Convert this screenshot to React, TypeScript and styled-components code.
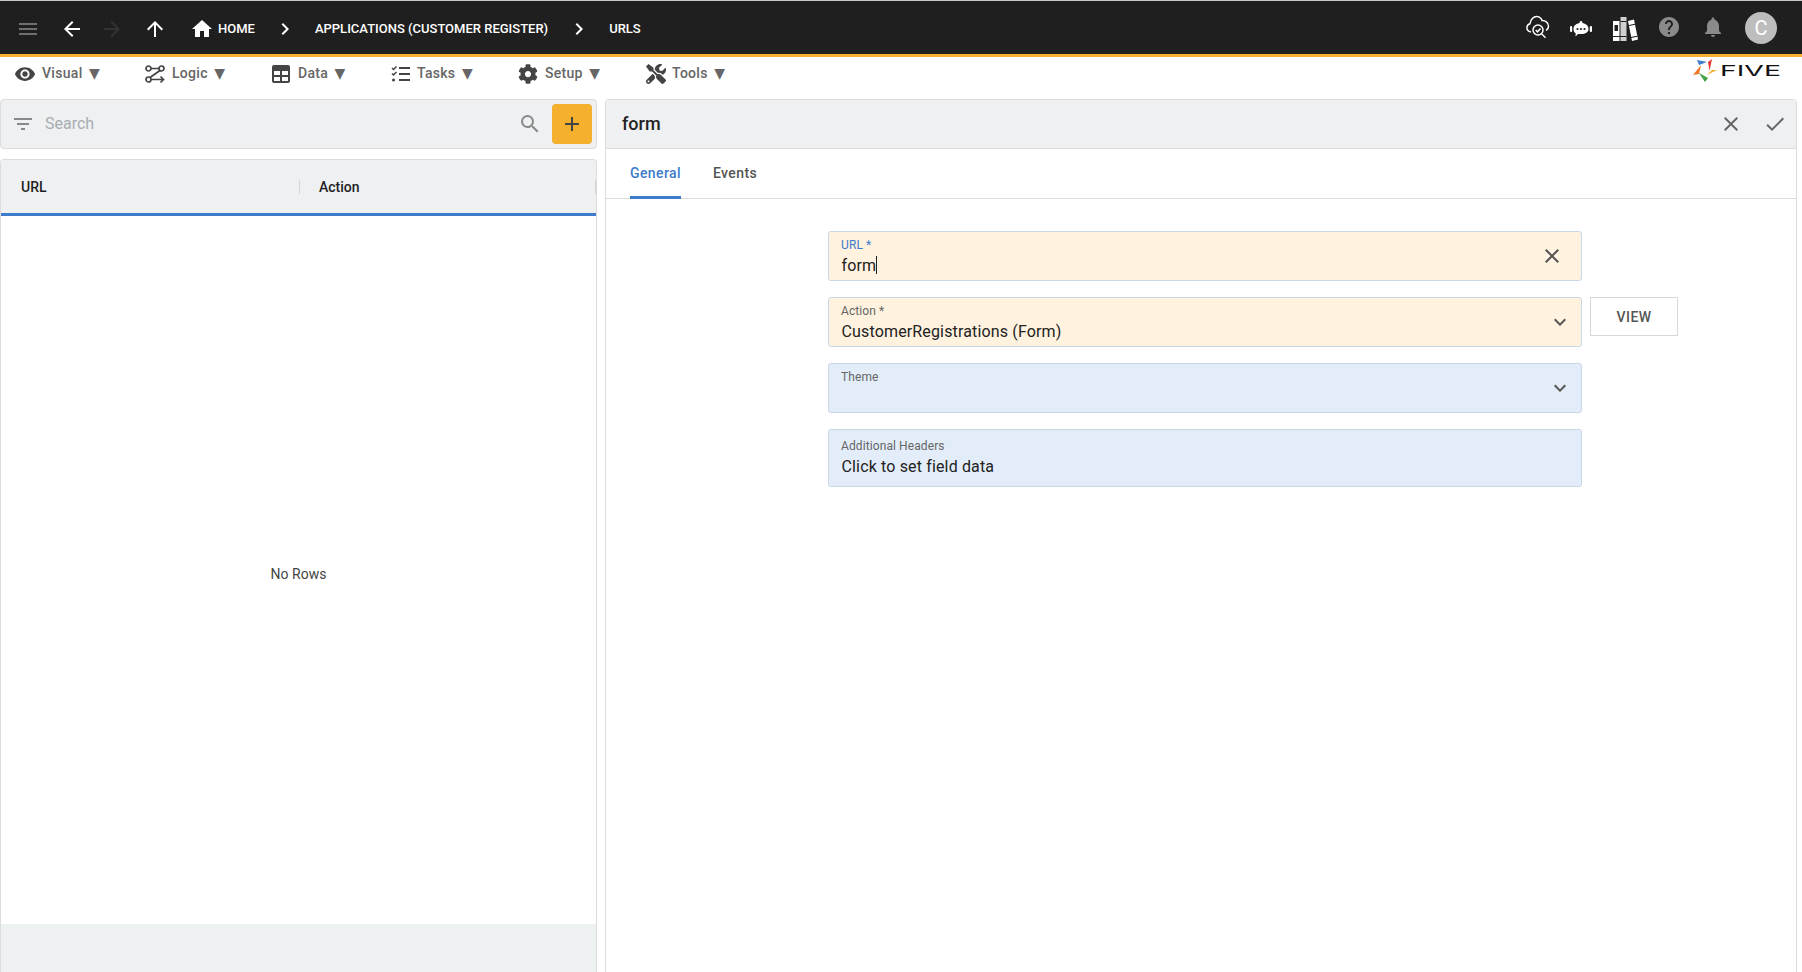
import React from "react";
import styled, { createGlobalStyle } from "styled-components";
import { MdMenu, MdArrowBack, MdArrowForward, MdArrowUpward, MdHome, MdChevronRight, MdVisibility, MdHelp, MdNotifications, MdSearch, MdAdd, MdClose, MdCheck, MdFilterList, MdKeyboardArrowDown } from "react-icons/md";
import { FaCog, FaTools } from "react-icons/fa";

const Global = createGlobalStyle`
  html, body { margin: 0; padding: 0; height: 100%; background: #fff; overflow: hidden; }
  body { font-family: Roboto, "Liberation Sans", sans-serif; }
  * { box-sizing: border-box; }
`;
const Page = styled.div`display:flex;flex-direction:column;height:972px;width:1802px;overflow:hidden;`;
const TopBar = styled.header`
  height: 57px; flex: none; background: #1f1f1f; border-top: 1px solid #c8c8c8; border-bottom: 3px solid #f5b02e;
  display:flex; align-items:center; padding: 2px 25px 0 16px; color:#fff;
`;
const IconBtn = styled.span<{ $c?: string; $w?: number; $s?: number; $up?: number }>`
  display:inline-flex; align-items:center; justify-content:center; flex:none;
  width:${p => p.$w ?? 44}px; color:${p => p.$c ?? "#fff"}; font-size:${p => p.$s ?? 24}px;
  margin-top:${p => -(p.$up ?? 0)}px;
`;
const Crumb = styled.span`font-size:13px;font-weight:500;color:#fff;white-space:nowrap;`;
const Spacer = styled.div`flex:1;`;
const Avatar = styled.div`width:32px;height:32px;border-radius:50%;background:#bdbdbd;color:#fff;font-size:20px;display:flex;align-items:center;justify-content:center;margin-left:10px;margin-top:-1px;`;
const Menu = styled.nav`height:42px;flex:none;display:flex;align-items:center;padding:0 0 9px 14px;position:relative;`;
const MenuItem = styled.div<{ $w: number; $gap: number }>`display:flex;align-items:center;gap:${p => p.$gap}px;width:${p => p.$w}px;font-size:14px;font-weight:500;color:#666;letter-spacing:.3px;flex:none;svg{color:#444;flex:none;}`;
const MenuText = styled.span`display:block;margin-top:-2px;`;
const Tri = styled.span`font-family:"DejaVu Sans",sans-serif;font-size:14px;margin-left:6.5px;letter-spacing:0;`;
const Logo = styled.div`position:absolute;right:20px;top:1px;display:flex;`;
const Main = styled.div`flex:1;display:flex;padding:0 5px 0 0;gap:8px;min-height:0;`;
const Left = styled.section`width:597px;flex:none;display:flex;flex-direction:column;gap:10px;`;
const SearchBar = styled.div`height:50px;flex:none;background:#eef0f2;border:1px solid #dcdcdc;border-radius:4px;display:flex;align-items:center;padding:0 4px 0 10px;`;
const SearchText = styled.div`flex:1;font-size:16px;color:#a9adb0;margin:-2px 0 0 10px;`;
const AddBtn = styled.div`width:40px;height:40px;background:#f5b02e;border-radius:4px;color:#444;display:flex;align-items:center;justify-content:center;font-size:24px;margin-left:10px;`;
const Table = styled.div`flex:1;display:flex;flex-direction:column;border:1px solid #dcdcdc;border-bottom:none;border-radius:4px 4px 0 0;min-height:0;`;
const THead = styled.div`height:56px;flex:none;background:#eef0f2;border-bottom:3px solid #3d7ccb;display:flex;align-items:center;border-radius:4px 4px 0 0;`;
const Th = styled.div<{ $w: number; $pad: number }>`width:${p => p.$w}px;padding-left:${p => p.$pad}px;font-size:14px;font-weight:500;color:#1f1f1f;position:relative;
  &::after{content:"";position:absolute;right:0;top:50%;margin-top:-7px;height:14px;width:1px;background:#d5d5d5;}`;
const TBody = styled.div`flex:1;display:flex;align-items:center;justify-content:center;font-size:14px;color:#444;padding-top:7px;`;
const TFoot = styled.div`height:48px;flex:none;background:#edf1f2;`;
const Right = styled.section`flex:1;display:flex;flex-direction:column;border:1px solid #dcdcdc;border-bottom:none;border-radius:4px 4px 0 0;min-width:0;`;
const FormHead = styled.div`height:49px;flex:none;background:#eef0f2;border-bottom:1px solid #dcdcdc;display:flex;align-items:center;padding:0 0 0 16px;`;
const FormTitle = styled.div`font-size:18px;font-weight:500;color:#222;margin-top:-2px;`;
const Tabs = styled.div`height:50px;flex:none;border-bottom:1px solid #dcdcdc;display:flex;padding-left:24px;gap:32px;`;
const Tab = styled.div<{ $on?: boolean }>`height:50px;display:flex;align-items:center;font-size:14px;font-weight:500;padding-top:1px;color:${p => p.$on ? "#3d7ccb" : "#555"};border-bottom:3px solid ${p => p.$on ? "#3d7ccb" : "transparent"};letter-spacing:.4px;`;
const FormBody = styled.div`padding:32px 0 0 222px;display:flex;flex-direction:column;gap:16px;`;
const Row = styled.div`display:flex;gap:8px;align-items:flex-start;`;
const Field = styled.div<{ $bg: string; $h?: number }>`width:754px;height:${p => p.$h ?? 50}px;background:${p => p.$bg};border:1px solid #c9d8e8;border-radius:3px;padding:${p => (p.$h ? 9 : 6)}px 12px 0;position:relative;`;
const Label = styled.div<{ $c?: string }>`font-size:12px;line-height:14px;letter-spacing:.1px;color:${p => p.$c ?? "#666"};`;
const Value = styled.div`font-size:16px;line-height:20px;letter-spacing:.15px;color:#222;margin-top:4px;height:20px;padding-left:.5px;`;
const Caret = styled.span`display:inline-block;width:1px;height:18px;background:#222;vertical-align:-3px;`;
const FieldIcon = styled.span<{ $r: number }>`position:absolute;right:${p => p.$r}px;top:50%;transform:translateY(-50%);display:flex;color:#555;font-size:24px;`;
const ViewBtn = styled.div`width:88px;height:39px;border:1px solid #d5d9dd;display:flex;align-items:center;justify-content:center;font-size:14px;font-weight:500;color:#555;letter-spacing:.4px;`;

const LogicIcon = () => (
  <svg width="20" height="20" viewBox="0 0 20 20" fill="none" stroke="currentColor" strokeWidth="1.700"><circle cx="3.500" cy="4.500" r="2.500" /><circle cx="16.500" cy="4.500" r="2.500" /><circle cx="3.500" cy="15.500" r="2.500" /><path d="M6 4.500h8M15 6.500 5 13.500M6 15.500h12.500M15.500 12.500l3 3-3 3" /></svg>
);
const DataIcon = () => (
  <svg width="24" height="24" viewBox="0 0 24 24" fill="currentColor"><path fillRule="evenodd" d="M5 3h14a2 2 0 0 1 2 2v14a2 2 0 0 1-2 2H5a2 2 0 0 1-2-2V5a2 2 0 0 1 2-2Zm0 6v4h6V9H5Zm8 0v4h6V9h-6Zm-8 6v4h6v-4H5Zm8 0v4h6v-4h-6Z" /></svg>
);
const TasksIcon = () => (
  <svg width="24" height="24" viewBox="0 0 24 24" fill="none" stroke="currentColor"><path strokeWidth="1.500" d="M3 6l1.500 1.500L7.500 4.500M3 11.500l1.500 1.500 3-3" /><circle cx="4.500" cy="18" r="1.500" fill="currentColor" stroke="none" /><path strokeWidth="2.200" d="M10 6h11M10 12h11M10 18h11" /></svg>
);
const CloudIcon = () => (
  <svg width="26" height="26" viewBox="-1 0 26 26" fill="none" stroke="#fff" strokeWidth="1.500"><path d="M6 19c-3-.3-4.500-2.500-4-5 .3-1.800 1.500-3 3-3.300C5.500 6.500 9 3 12 3.500c2.500.3 4.300 1.800 5 4 3-.3 6.500 2 6.500 5.500 0 2-1 3.500-2.500 4.300" /><circle cx="13" cy="17" r="5" /><path d="M16.500 20.800l4 4" /><path d="M10.700 17l1.800 1.800 3-3.300" /></svg>
);
const BotIcon = () => (
  <svg width="24" height="24" viewBox="0 0 24 24" fill="#fff"><circle cx="12" cy="5.200" r="1.300" /><path d="M12 6c4.500 0 7.500 2.500 7.500 6s-3 5-7.500 5H9l-2.500 2.500.2-3.200C5 15.300 4.500 13.800 4.500 12c0-3.500 3-6 7.500-6Z" /><rect x="1" y="9" width="2.200" height="6" rx="1" /><rect x="20.800" y="9" width="2.200" height="6" rx="1" /><g fill="#1f1f1f"><circle cx="8.500" cy="12" r="1.100" /><circle cx="12" cy="12" r="1.100" /><circle cx="15.500" cy="12" r="1.100" /></g></svg>
);
const BooksIcon = () => (
  <svg width="26" height="26" viewBox="0 0 26 26" fill="#fff"><rect x="1" y="5" width="6.500" height="20" /><rect x="8.500" y="1" width="6" height="24" fill="#d0d0d0" /><path d="m16 5 6-1.500L26 23.500l-6 1.500Z" /><g fill="#1f1f1f"><rect x="2.500" y="9" width="3.500" height="6" /><rect x="1" y="20" width="13.500" height="1" /><rect x="8.500" y="5" width="6" height="1" /><path d="m17 9 6-1.300.2 1-6 1.300ZM19 21l6-1.300.2 1-6 1.300Z" /></g></svg>
);
const FiveLogo = () => (
  <svg width="90" height="26" viewBox="0 0 90 26">
    <path d="M5 2l10 2-8 3Z" fill="#3d7ccb" /><path d="M20 1l-2.500 12L16 4Z" fill="#e53935" /><path d="M25 12l-10 5 5-5Z" fill="#f5b02e" /><path d="M7 15l9 5-3 4Z" fill="#43a047" /><path d="M9 7L1 17l6-1Z" fill="#f4762a" />
    <text x="28" y="18" fontFamily="Inter, sans-serif" fontSize="14" fontWeight="400" textLength="61" lengthAdjust="spacingAndGlyphs" fill="#111">FIVE</text>
  </svg>
);

const Caption = ({ t }: { t: string }) => <MenuText>{t}<Tri>▼</Tri></MenuText>;

export default function App() {
  return (
    <Page>
      <Global />
      <TopBar>
        <IconBtn $c="#6f6f6f" $w={24}><MdMenu /></IconBtn>
        <IconBtn $w={52} style={{ marginLeft: 6 }}><MdArrowBack /></IconBtn>
        <IconBtn $c="#333" $w={27}><MdArrowForward /></IconBtn>
        <IconBtn $w={60}><MdArrowUpward /></IconBtn>
        <IconBtn $w={33}><MdHome /></IconBtn>
        <Crumb>HOME</Crumb>
        <IconBtn $w={60}><MdChevronRight /></IconBtn>
        <Crumb>APPLICATIONS (CUSTOMER REGISTER)</Crumb>
        <IconBtn $w={61}><MdChevronRight /></IconBtn>
        <Crumb>URLS</Crumb>
        <Spacer />
        <IconBtn $w={44} $up={5}><CloudIcon /></IconBtn>
        <IconBtn $w={44}><BotIcon /></IconBtn>
        <IconBtn $w={44}><BooksIcon /></IconBtn>
        <IconBtn $w={44} $c="#8a8a8a" $up={3}><MdHelp /></IconBtn>
        <IconBtn $w={44} $c="#8a8a8a" $up={3}><MdNotifications /></IconBtn>
        <Avatar>C</Avatar>
      </TopBar>
      <Menu>
        <MenuItem $w={131} $gap={6}><MdVisibility size={22} /><Caption t="Visual" /></MenuItem>
        <MenuItem $w={124} $gap={7}><LogicIcon /><Caption t="Logic" /></MenuItem>
        <MenuItem $w={120} $gap={5}><DataIcon /><Caption t="Data" /></MenuItem>
        <MenuItem $w={129} $gap={4}><TasksIcon /><Caption t="Tasks" /></MenuItem>
        <MenuItem $w={128} $gap={7}><FaCog size={20} /><Caption t="Setup" /></MenuItem>
        <MenuItem $w={120} $gap={6}><FaTools size={20} /><Caption t="Tools" /></MenuItem>
        <Logo><FiveLogo /></Logo>
      </Menu>
      <Main>
        <Left>
          <SearchBar>
            <IconBtn $c="#888" $w={24}><MdFilterList /></IconBtn>
            <SearchText>Search</SearchText>
            <IconBtn $c="#888" $w={24}><MdSearch /></IconBtn>
            <AddBtn><MdAdd /></AddBtn>
          </SearchBar>
          <Table>
            <THead>
              <Th $w={299} $pad={20}>URL</Th>
              <Th $w={296} $pad={19}>Action</Th>
            </THead>
            <TBody>No Rows</TBody>
            <TFoot />
          </Table>
        </Left>
        <Right>
          <FormHead>
            <FormTitle>form</FormTitle>
            <Spacer />
            <IconBtn $c="#666" $w={44}><MdClose /></IconBtn>
            <IconBtn $c="#666" $w={43}><MdCheck /></IconBtn>
          </FormHead>
          <Tabs>
            <Tab $on>General</Tab>
            <Tab>Events</Tab>
          </Tabs>
          <FormBody>
            <Field $bg="#fff2de">
              <Label $c="#3d7ccb">URL *</Label>
              <Value>form<Caret /></Value>
              <FieldIcon $r={17}><MdClose /></FieldIcon>
            </Field>
            <Row>
              <Field $bg="#fff2de">
                <Label>Action *</Label>
                <Value>CustomerRegistrations (Form)</Value>
                <FieldIcon $r={9}><MdKeyboardArrowDown /></FieldIcon>
              </Field>
              <ViewBtn>VIEW</ViewBtn>
            </Row>
            <Field $bg="#e3edf9">
              <Label>Theme</Label>
              <Value />
              <FieldIcon $r={9}><MdKeyboardArrowDown /></FieldIcon>
            </Field>
            <Field $bg="#e3edf9" $h={58}>
              <Label>Additional Headers</Label>
              <Value>Click to set field data</Value>
            </Field>
          </FormBody>
        </Right>
      </Main>
    </Page>
  );
}
